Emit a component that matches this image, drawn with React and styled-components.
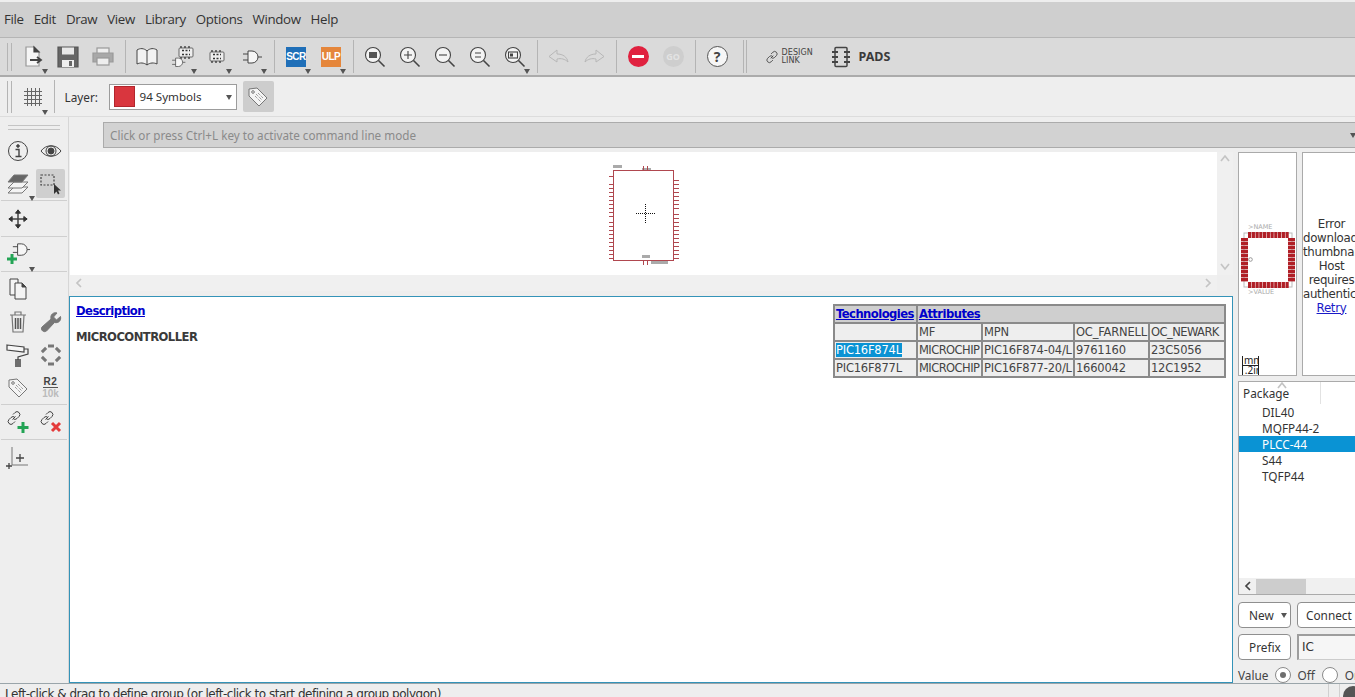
import React from "react";
import styled, { createGlobalStyle } from "styled-components";

const Global = createGlobalStyle`
  html, body { margin: 0; padding: 0; background: #eeeeee; overflow: hidden; }
  * { box-sizing: border-box; }
`;

const UI = `"Noto Sans", "DejaVu Sans", sans-serif`;
const TAHOMA = `"DejaVu Sans", "Noto Sans", sans-serif`;

const Page = styled.div`
  width: 1355px; height: 697px; overflow: hidden; background: #eee;
  display: flex; flex-direction: column; font-family: ${UI}; color: #333;
`;
const MenuBar = styled.nav`
  height: 36px; margin-top: 2px; background: #cfcfcf; border-bottom: 1px solid #b5b5b5;
  display: flex; align-items: center; gap: 10px; padding: 0 0 2px 4px; font-size: 13.3px; flex: none;
  font-family: "Open Sans", sans-serif; letter-spacing: -0.35px;
`;
const Toolbar = styled.div`
  height: 39px; background: #dadada; border-bottom: 2px solid #ababab; flex: none;
  display: flex; align-items: center; padding-left: 7px;
`;
const Grip = styled.span`
  width: 5px; height: ${p => p.$h || 28}px; flex: none; margin-right: 3.5px;
  border-left: 1px solid #b4b4b4; border-right: 1px solid #b4b4b4;
`;
const Sep = styled.span`
  width: 1px; height: 33px; background: #b4b4b4; flex: none;
  margin: 0 ${p => p.$mr ?? 4}px 0 ${p => p.$ml ?? 4}px;
`;
const ToolBtn = styled.span`
  position: relative; width: 35px; height: 34px; flex: none;
  display: flex; align-items: center; justify-content: center;
`;
const Caret = styled.i`
  position: absolute; right: ${p => p.$r ?? 4}px; bottom: ${p => p.$b ?? 1}px; width: 0; height: 0;
  border-left: 3.5px solid transparent; border-right: 3.5px solid transparent; border-top: 5px solid #555;
`;
const DesignLink = styled.span`
  display: flex; align-items: center; gap: 3px; margin-left: 18px; width: 66px;
`;
const DesignText = styled.span`
  font: 500 8px/7.5px ${TAHOMA}; letter-spacing: 0.1px; color: #444; white-space: pre-line;
`;
const Pads = styled.span`
  display: flex; align-items: center; gap: 8px; font: 700 12.5px "Noto Sans", sans-serif; color: #3a3a3a;
`;
const LayerBar = styled.div`
  height: 40px; background: #eeeeee; border-bottom: 1px solid #dcdcdc; flex: none;
  display: flex; align-items: center; padding-left: 7px;
`;
const LayerLabel = styled.span`
  font: 11.8px ${UI}; margin-left: 10px; width: 44px; color: #333;
`;
const LayerSelect = styled.div`
  width: 128px; height: 26px; background: #fff; border: 1px solid #9c9c9c;
  display: flex; align-items: center; padding-left: 4px; font: 11.6px ${UI}; position: relative; color: #333;
`;
const Swatch = styled.span`
  width: 21px; height: 21px; background: #d9363e; border: 1px solid #b2262d; margin-right: 5px;
`;
const TagBtn = styled.span`
  width: 31px; height: 31px; margin-left: 6px; background: #cdcdcd; border-radius: 2px;
  display: flex; align-items: center; justify-content: center;
`;
const Body = styled.div`
  flex: 1; display: flex; min-height: 0;
`;
const LeftTools = styled.aside`
  width: 69px; flex: none; border-right: 1px solid #d6d6d6; padding: 8px 1px 0 1px;
`;
const ToolGrip = styled.div`
  height: 5px; margin: 0 7px 4px; border-top: 1px solid #c4c4c4; border-bottom: 1px solid #c4c4c4;
`;
const ToolRow = styled.div`
  display: grid; grid-template-columns: 33px 33px; justify-content: start; height: ${p => p.$h || 33}px;
  align-items: center; justify-items: center;
`;
const ToolCell = styled.span`
  position: relative; width: 29px; height: 29px; display: flex; align-items: center; justify-content: center;
  border-radius: 2px; background: ${p => (p.$active ? "#cfcfcf" : "transparent")};
`;
const ToolDivider = styled.div`
  height: 1px; background: #cfcfcf;
`;
const Center = styled.div`
  display: flex; flex-direction: column; flex: 1; min-width: 0;
`;
const CommandWrap = styled.div`
  height: 35px; padding: 5px 0 0 34px; flex: none;
`;
const Command = styled.div`
  height: 26px; background: #d2d2d2; border: 1px solid #ababab; border-right: 0; position: relative;
  display: flex; align-items: center; padding-left: 6px; font: 11.7px ${UI}; color: #8a8a8a;
`;
const Workspace = styled.div`
  flex: 1; display: flex; min-height: 0;
`;
const EditorCol = styled.div`
  width: 1164px; flex: none; display: flex; flex-direction: column;
`;
const CanvasRow = styled.div`
  height: 123px; display: flex; flex: none;
`;
const Canvas = styled.div`
  flex: 1; margin-left: 1px; background: #fff; display: flex; justify-content: center; padding: 12px 2px 0 0;
`;
const VScroll = styled.div`
  width: 16px; background: #f0f0f0; display: flex; flex-direction: column; justify-content: space-between;
  align-items: center; padding: 2px 0 4px;
`;
const HScroll = styled.div`
  height: 16px; margin-left: 1px; margin-right: 16px; background: #f0f0f0; flex: none;
  display: flex; justify-content: space-between; align-items: center; padding: 0 5px;
`;
const Spacer = styled.div`
  height: 5px; flex: none;
`;
const Description = styled.section`
  flex: 1; background: #fff; border: 1px solid #3493b8; display: flex; justify-content: space-between;
  align-items: flex-start; padding: 7px 6px 0 6px;
`;
const DescText = styled.div`
  font: 700 11.6px "DejaVu Sans", sans-serif; letter-spacing: -0.55px; color: #333;
`;
const Link = styled.a`
  color: #0000cc; text-decoration: underline; font-weight: 700;
`;
const DescBody = styled.p`
  margin: 12px 0 0; color: #3a3a3a;
`;
const Attr = styled.table`
  border-collapse: separate; border-spacing: 2px; background: #8a8a8a; width: 393px; table-layout: fixed;
  font: 11.5px ${TAHOMA}; letter-spacing: -0.2px; color: #444;
  td, th { padding: 0 1px; height: 16px; line-height: 16px; background: #eeeeee; font-weight: 400; text-align: left; white-space: nowrap; overflow: visible; }
  th { background: #cfcfcf; font-weight: 700; font-size: 11.6px; letter-spacing: -0.55px; }
`;
const Tight = styled.span`
  letter-spacing: -0.55px;
`;
const Selected = styled.span`
  background: #0a93d4; color: #fff;
`;
const RightPanel = styled.div`
  flex: 1; min-width: 0; padding-left: 5px; display: flex; flex-direction: column; overflow: hidden;
`;
const Thumbs = styled.div`
  display: flex; gap: 5px; height: 224px; flex: none; width: 140px;
`;
const Thumb = styled.div`
  position: relative; flex: none; width: ${p => p.$w}px; background: #fff; border: 1px solid #aaa;
  display: flex; flex-direction: column; align-items: ${p => (p.$start ? "flex-start" : "center")}; justify-content: center; overflow: hidden;
`;
const PackageWrap = styled.span`
  display: block; margin-top: -10px; line-height: 0;
`;
const Scale = styled.div`
  position: absolute; left: 3px; bottom: 0; width: 17px; height: 19px; overflow: hidden;
  display: flex; flex-direction: column; align-items: center; font: 10px/9px ${UI}; color: #222;
  border: 1px solid #222; border-width: 0 1px;
`;
const ScaleLine = styled.span`
  flex: none; white-space: nowrap; border-bottom: ${p => (p.$u ? "1px solid #222" : "0")};
`;
const ThumbMsg = styled.div`
  width: 57px; flex: none; text-align: center; font: 11.8px/14px ${TAHOMA}; letter-spacing: -0.3px; color: #333; margin-top: 3px;
`;
const MsgLine = styled.div`
  white-space: nowrap;
`;
const Retry = styled.a`
  color: #1a1ac8; text-decoration: underline; display: block;
`;
const ListBox = styled.div`
  margin-top: 5px; height: 214px; width: 140px; background: #fff; border: 1px solid #aaa; flex: none;
  display: flex; flex-direction: column; position: relative;
`;
const ListHead = styled.div`
  height: 22px; flex: none; padding: 3px 0 0 4px; font: 11.8px ${UI}; color: #333; position: relative; width: 82px;
  border-right: 1px solid #e2e2e2;
`;
const SortMark = styled.span`
  position: absolute; left: 38px; top: -1px; line-height: 0;
`;
const ListItem = styled.div`
  height: 16px; font: 11.8px/16px ${UI}; padding-left: 23px; flex: none;
  background: ${p => (p.$sel ? "#0a93d4" : "transparent")}; color: ${p => (p.$sel ? "#fff" : "#333")};
`;
const ListScroll = styled.div`
  margin-top: auto; height: 16px; background: #f0f0f0; display: flex; align-items: center; padding-left: 5px; flex: none;
`;
const Thumbbar = styled.span`
  width: 50px; height: 15px; background: #cdcdcd; margin-left: 4px;
`;
const BtnRow = styled.div`
  display: flex; gap: 6px; margin-top: ${p => p.$mt}px; width: 140px; flex: none;
`;
const Btn = styled.span`
  position: relative; flex: none; width: ${p => p.$w}px; height: 26px; border: 1px solid #8f8f8f; border-radius: 4px; background: #fff;
  font: 11.8px/24px ${UI}; padding-left: ${p => p.$pl ?? 10}px; color: #333; white-space: nowrap;
`;
const Field = styled.span`
  flex: none; width: 70px; height: 26px; border: 1px solid #ccc; border-left: 2px solid #9d9d9d; border-top: 2px solid #9d9d9d;
  background: #f6f6f6; font: 12px/22px "DejaVu Sans", sans-serif; padding-left: 3px; color: #333;
`;
const ValueRow = styled.div`
  display: flex; align-items: center; margin-top: 6px; font: 11.8px ${UI}; width: 140px; height: 18px; flex: none; color: #444;
`;
const Radio = styled.span`
  width: 16px; height: 16px; border-radius: 50%; border: 1px solid #8a8a8a; background: #fff; flex: none;
  margin: 0 ${p => p.$mr}px 0 ${p => p.$ml}px; display: flex; align-items: center; justify-content: center;
  &::after { content: ""; width: 6px; height: 6px; border-radius: 50%; background: ${p => (p.$on ? "#6f6f6f" : "transparent")}; }
`;
const Status = styled.footer`
  height: 14px; flex: none; border-top: 1px solid #9aa5aa; background: #eee; padding: 3px 0 0 5px;
  font: 12px/14px ${TAHOMA}; letter-spacing: -0.48px; color: #333; display: flex; position: relative; overflow: hidden;
`;
const StatusSep = styled.span`
  position: absolute; left: ${p => p.$x}px; top: 0; bottom: 0; width: 1px; background: #d0d0d0;
`;
const StatusDot = styled.span`
  position: absolute; left: 1343px; top: 2px; width: 20px; height: 20px; border-radius: 50%; background: #555;
`;

const S = ({ w = 24, h = 24, vb, children, sw = 1.2, c = "#444", ...r }) => (
  <svg width={w} height={h} viewBox={vb || `0 0 ${w} ${h}`} fill="none" stroke={c} strokeWidth={sw} {...r}>{children}</svg>
);

const NewIco = () => (<S><path d="M5 2h8l5 5v14H5z" fill="#f6f6f6" stroke="#999" /><path d="M13 2v5h5z" fill="#444" stroke="#444" /><path d="M9 15h10M16 12l4 3-4 3" stroke="#444" strokeWidth="1.8" /></S>);
const SaveIco = () => (<S><path d="M2 2h20v20H2z" fill="#666" stroke="#555" /><rect x="6" y="2.5" width="12" height="7" fill="#e8e8e8" stroke="none" /><rect x="6" y="15" width="12" height="7" fill="#eee" stroke="none" /><rect x="13" y="16" width="3" height="5" fill="#666" stroke="none" /></S>);
const PrintIco = () => (<S><rect x="6" y="3" width="12" height="6" fill="#eee" stroke="#999" /><path d="M2 8h20v9H2z" fill="#a8a8a8" stroke="#999" /><rect x="6" y="13" width="12" height="7" fill="#eee" stroke="#999" /></S>);
const BookIco = () => (<S sw={1}><path d="M12 6C9 3 5 3 2 5v14c3-1.5 7-1.5 10 1 3-2.5 7-2.5 10-1V5c-3-2-7-2-10 1zM12 6v14" fill="#f2f2f2" /></S>);
const Chip = ({ x = 0, y = 0 }) => (<g transform={`translate(${x} ${y})`}><rect x="2" y="3" width="14" height="9" rx="1" stroke="#666" fill="#eee" strokeWidth="1" /><path d="M4 3V1M8 3V1M12 3V1M4 14v-2M8 14v-2M12 14v-2M5 5.500h8M5 9.500h8" stroke="#333" strokeDasharray="2 1.500" strokeWidth="1.300" /></g>);
const Gate = ({ c = "#444" }) => (<g stroke={c} strokeWidth="1"><path d="M8 3h4a6 6 0 0 1 0 12H8z" fill="#f6f6f6" /><path d="M3 6h5M3 12h5M18 9h4" /></g>);
const BoardIco = () => (<S><Chip x="7" y="0" /><g transform="translate(0 11) scale(.7)"><Gate /></g></S>);
const ChipIco = () => (<S><Chip x="3" y="4" /></S>);
const GateIco = () => (<S><g transform="translate(0 3)"><Gate /></g></S>);
const Badge = styled.span`
  width: 20px; height: 20px; display: flex; align-items: center; justify-content: center; font: 700 10px "Liberation Sans", sans-serif;
  color: #fff; background: ${p => p.$c}; letter-spacing: -0.5px;
`;
const Zoom = ({ children }) => (<S sw={1.1}><circle cx="10" cy="10" r="7.500" fill="#f4f4f4" /><path d="M15.500 15.500l6 6" strokeWidth="1.600" />{children}</S>);
const ArrowL = () => (<S w={22} h={16} c="#b7b7b7" sw={1}><path d="M9 1L1 7.500 9 13V10c4-1 8 0 11 3-1-5-5-8-11-8z" /></S>);
const ArrowR = () => (<S w={22} h={16} c="#b7b7b7" sw={1}><path d="M13 1l8 6.500L13 13V10C9 9 5 10 2 13c1-5 5-8 11-8z" /></S>);
const Stop = styled.span`
  width: 21px; height: 21px; border-radius: 50%; background: #e0213f; display: flex; align-items: center; justify-content: center;
  &::after { content: ""; width: 12px; height: 3px; background: #fff; }
`;
const Go = styled.span`
  width: 21px; height: 21px; border-radius: 50%; background: #cecece; color: #e3e3e3; font: 700 9px/21px ${UI}; text-align: center;
`;
const Help = styled.span`
  width: 21px; height: 21px; border-radius: 50%; border: 1px solid #555; background: #f6f6f6; color: #444; font: 700 14px/19px ${UI}; text-align: center;
`;
const LinkIco = ({ w = 16, h = 16 }) => (<S w={w} h={h} vb="0 0 16 16" sw={1}><path d="M6.500 9.500l3-3M7 4.500l2-2a2.800 2.800 0 0 1 4 4l-2 2a2.800 2.800 0 0 1-4 0M9 11.500l-2 2a2.800 2.800 0 0 1-4-4l2-2a2.800 2.800 0 0 1 4 0" /></S>);
const PadsIco = () => (<S w={20} h={22} sw={1.500}><rect x="4" y="1.500" width="12" height="19" rx="1" /><path d="M1 6h6M1 11h6M1 16h6M13 6h6M13 11h6M13 16h6" strokeWidth="2" /></S>);
const GridIco = () => (<S w={20} h={20} sw={1} c="#666"><path d="M4.500 1v18M8.500 1v18M12.500 1v18M16.500 1v18M1 4.500h18M1 8.500h18M1 12.500h18M1 16.500h18" /></S>);
const TagIco = () => (<S w={22} h={22} c="#777" sw={1}><path d="M2 3l8-1 10 10-8 8L2 10z" fill="#f4f4f4" /><circle cx="6" cy="6" r="1.300" /><path d="M9 8l6 6M8 10l6 6M11 7l5 5" strokeDasharray="1 1" /></S>);
const InfoIco = () => (<S sw={1}><circle cx="12" cy="12" r="9.500" /><circle cx="12" cy="7" r="1.300" fill="#444" /><path d="M9.500 10.500H13V17M9.500 17.500h6" strokeWidth="1.400" /></S>);
const EyeIco = () => (<S sw={1}><path d="M2 12c5-7 15-7 20 0-5 7-15 7-20 0z" /><circle cx="12" cy="12" r="5" /><circle cx="12" cy="12" r="3" fill="#444" /></S>);
const LayersIco = () => (<S c="#777" sw={1}><path d="M2 21l6-6h14l-6 6z" fill="#f4f4f4" /><path d="M2 16l6-6h14l-6 6z" fill="#f4f4f4" /><path d="M2 10l6-7h14l-6 7z" fill="#666" /></S>);
const SelectIco = () => (<S><rect x="2" y="3" width="13" height="10" strokeDasharray="2 1.500" /><path d="M15 12v10l2.500-2.500 1.500 3 1.500-1-1.500-3H22z" fill="#333" stroke="none" /></S>);
const MoveIco = () => (<S w={20} h={20} vb="0 0 24 24"><path d="M12 2v20M2 12h20" strokeWidth="1.800" /><path d="M12 1l3 4H9zM12 23l3-4H9zM1 12l4-3v6zM23 12l-4-3v6z" fill="#333" stroke="#333" /></S>);
const AddGateIco = () => (<S><g transform="translate(4 -1) scale(.95)"><Gate /></g><path d="M6 12v10M1 17h10" stroke="#23a455" strokeWidth="3" /></S>);
const CopyIco = () => (<S sw={1}><path d="M4 2h8v16H4z" fill="#f4f4f4" /><path d="M9 6h7l4 4v12H9z" fill="#f4f4f4" /><path d="M16 6v4h4z" fill="#444" /></S>);
const TrashIco = () => (<S c="#777" sw={1.200}><path d="M4 5h16M9 5V2h6v3M6 5l1 17h10l1-17" /><path d="M9.500 8v11M12 8v11M14.500 8v11" strokeWidth="1.500" stroke="#555" /></S>);
const WrenchIco = () => (<S w={22} h={22} sw={1} c="#777"><path d="M20.500 5.500l-4 3.500-3-3 3.500-4c-3-1-7 1-6 6L2 16c-2 3 2 6 4.500 4l8-8.500c4 1 7-2 6-6z" fill="#777" /></S>);
const RollerIco = () => (<S sw={1.200}><path d="M1 2l17 2v5L1 7z" fill="#f6f6f6" /><path d="M18 6h4v5l-10 3v3" /><path d="M9 17h6M9 19h6M9 21h6M9 23h6" strokeWidth="1.500" /></S>);
const RingIco = () => (<S c="#777" sw={0}><g fill="#777">{[[12, 3, 0], [19, 7, 45], [19, 16, -45], [12, 21, 0], [5, 16, 45], [5, 7, -45]].map(([x, y, r]) => <rect key={`${x}${y}`} x={x - 3} y={y - 1.500} width="6" height="3" transform={`rotate(${r} ${x} ${y})`} />)}</g></S>);
const R2 = styled.span`
  display: flex; flex-direction: column; align-items: center; font: 700 10px/9px "Liberation Sans", sans-serif; color: #444;
`;
const R2Top = styled.span`
  border-bottom: 1px solid #555; padding: 0 1px 1px; letter-spacing: 0.5px;
`;
const R2Bot = styled.span`
  color: #bbb; padding-top: 1px;
`;
const LinkAdd = () => (<S><LinkIco /><path d="M17 12v11M11.500 17.500h11" stroke="#23a455" strokeWidth="3" /></S>);
const LinkDel = () => (<S><LinkIco /><path d="M13 13l8 8M21 13l-8 8" stroke="#e43b3b" strokeWidth="3" /></S>);
const MarkIco = () => (<S sw={1}><path d="M6 1v18M6 19h16" stroke="#777" /><path d="M14 8v8M10 12h8M3 17v6M0 20h6" strokeWidth="1.300" /></S>);
const ChevV = ({ up }) => (<S w={10} h={8} c="#c4c4c4" sw={1.700}><path d={up ? "M1 7l4-5 4 5" : "M1 1l4 5 4-5"} /></S>);
const ChevH = ({ left, c = "#c4c4c4" }) => (<S w={8} h={10} c={c} sw={1.700}><path d={left ? "M6 1L2 5l4 4" : "M2 1l4 4-4 4"} /></S>);

const Symbol = () => {
  const left = [0, 8, 12, 16, 20, 24, 28, 32, 36, 40, 46, 50, 54, 58, 62, 66, 70, 74, 78, 82];
  const right = [4, 8, 12, 16, 20, 24, 28, 32, 38, 42, 46, 50, 54, 58, 62, 66, 70, 74, 78, 82];
  return (
    <svg width="74" height="103" viewBox="0 0 74 103">
      <rect x="7" y="1" width="9" height="3" fill="#aaa" />
      <rect x="36" y="4" width="9" height="3" fill="#aaa" />
      <rect x="36" y="91" width="8" height="3" fill="#aaa" />
      <rect x="45" y="97" width="17" height="3" fill="#aaa" />
      <g stroke="#b0474f" strokeWidth="1" fill="none">
        <rect x="7.500" y="6.500" width="60" height="90" />
        <path d="M37.500 2v4M41.500 2v4M37.500 97v4M41.500 97v4" />
        {left.map(v => <path key={v} d={`M3 ${v + 12.500}h4`} />)}
        {right.map(v => <path key={v} d={`M68 ${v + 12.500}h5`} />)}
      </g>
      <path d="M39.500 40v19M30 49.500h19" stroke="#111" strokeWidth="1" strokeDasharray="1 1" />
    </svg>
  );
};

const Package = () => {
  const h = Array.from({ length: 11 }, (_, i) => i);
  return (
    <svg width="56" height="72" viewBox="0 0 56 72">
      <text x="8" y="6" fontFamily="DejaVu Sans" fontSize="6.500" fill="#aaa">&gt;NAME</text>
      <text x="8" y="71" fontFamily="DejaVu Sans" fontSize="6.500" fill="#aaa">&gt;VALUE</text>
      <rect x="4" y="10" width="48" height="54" fill="none" stroke="#bbb" />
      <g fill="#b01f26">
        {h.map(i => <rect key={`t${i}`} x={8 + i * 3.750} y="9" width="3.200" height="6" />)}
        {h.map(i => <rect key={`b${i}`} x={8 + i * 3.750} y="59" width="3.200" height="6" />)}
        {h.map(i => <rect key={`l${i}`} x="1" y={15 + i * 4} width="7" height="3.400" />)}
        {h.map(i => <rect key={`r${i}`} x="48" y={15 + i * 4} width="7" height="3.400" />)}
      </g>
      <circle cx="10.500" cy="36.500" r="1.800" fill="#fff" stroke="#999" />
    </svg>
  );
};

const TB = ({ children, caret, b = 0 }) => (<ToolBtn>{children}{caret && <Caret $r={3} $b={b} />}</ToolBtn>);
const TC = ({ children, active, caret }) => (<ToolCell $active={active}>{children}{caret && <Caret $r={-3} $b={-3} />}</ToolCell>);

const rows = [
  { n: "PIC16F874L", sel: true, mpn: "PIC16F874-04/L", f: "9761160", w: "23C5056" },
  { n: "PIC16F877L", mpn: "PIC16F877-20/L", f: "1660042", w: "12C1952" },
];
const msg = ["Error", "downloading", "thumbnail", "Host", "requires", "authentication"];

export default function App() {
  return (
    <Page>
      <Global />
      <MenuBar>
        {["File", "Edit", "Draw", "View", "Library", "Options", "Window", "Help"].map(m => <span key={m}>{m}</span>)}
      </MenuBar>
      <Toolbar>
        <Grip />
        <TB caret><NewIco /></TB>
        <TB><SaveIco /></TB>
        <TB><PrintIco /></TB>
        <Sep />
        <TB><BookIco /></TB>
        <TB caret><BoardIco /></TB>
        <TB caret><ChipIco /></TB>
        <TB caret><GateIco /></TB>
        <Sep />
        <TB caret><Badge $c="#1f6fb8">SCR</Badge></TB>
        <TB caret><Badge $c="#e5863b">ULP</Badge></TB>
        <Sep />
        <TB><Zoom><rect x="6" y="7" width="8" height="6" fill="#555" stroke="none" /></Zoom></TB>
        <TB><Zoom><path d="M6 10h8M10 6v8" /></Zoom></TB>
        <TB><Zoom><path d="M6 10h8" /></Zoom></TB>
        <TB><Zoom><path d="M7 8h6M7 12h6" /></Zoom></TB>
        <TB caret><Zoom><rect x="5.500" y="7" width="9" height="6" /><rect x="7" y="8.500" width="3" height="3" fill="#444" stroke="none" /></Zoom></TB>
        <Sep />
        <TB><ArrowL /></TB>
        <TB><ArrowR /></TB>
        <Sep />
        <TB><Stop /></TB>
        <TB><Go>GO</Go></TB>
        <Sep />
        <TB><Help>?</Help></TB>
        <Sep $ml={8} $mr={0} />
        <Sep $ml={2} $mr={0} />
        <DesignLink><LinkIco w={14} h={14} /><DesignText>{"DESIGN\nLINK"}</DesignText></DesignLink>
        <Pads><PadsIco />PADS</Pads>
      </Toolbar>
      <LayerBar>
        <Grip $h={32} />
        <TB caret b={-1}><GridIco /></TB>
        <Sep $ml={3} $mr={0} />
        <LayerLabel>Layer:</LayerLabel>
        <LayerSelect>
          <Swatch />94 Symbols<Caret $r={4} $b={9} />
        </LayerSelect>
        <TagBtn><TagIco /></TagBtn>
      </LayerBar>
      <Body>
        <LeftTools>
          <ToolGrip />
          <ToolRow><TC><InfoIco /></TC><TC><EyeIco /></TC></ToolRow>
          <ToolRow><TC caret><LayersIco /></TC><TC active><SelectIco /></TC></ToolRow>
          <ToolDivider />
          <ToolRow $h={35}><TC><MoveIco /></TC></ToolRow>
          <ToolDivider />
          <ToolRow $h={34}><TC caret><AddGateIco /></TC></ToolRow>
          <ToolDivider />
          <ToolRow><TC><CopyIco /></TC></ToolRow>
          <ToolRow><TC><TrashIco /></TC><TC><WrenchIco /></TC></ToolRow>
          <ToolRow><TC><RollerIco /></TC><TC><RingIco /></TC></ToolRow>
          <ToolRow><TC><TagIco /></TC><TC><R2><R2Top>R2</R2Top><R2Bot>10k</R2Bot></R2></TC></ToolRow>
          <ToolDivider />
          <ToolRow $h={34}><TC><LinkAdd /></TC><TC><LinkDel /></TC></ToolRow>
          <ToolDivider />
          <ToolRow $h={35}><TC><MarkIco /></TC></ToolRow>
        </LeftTools>
        <Center>
          <CommandWrap>
            <Command>
              Click or press Ctrl+L key to activate command line mode
              <Caret $r={-1} $b={9} />
            </Command>
          </CommandWrap>
          <Workspace>
            <EditorCol>
              <CanvasRow>
                <Canvas><Symbol /></Canvas>
                <VScroll><ChevV up /><ChevV /></VScroll>
              </CanvasRow>
              <HScroll><ChevH left /><ChevH /></HScroll>
              <Spacer />
              <Description>
                <DescText>
                  <Link href="#">Description</Link>
                  <DescBody>MICROCONTROLLER</DescBody>
                </DescText>
                <Attr>
                  <colgroup>
                    <col width="81" /><col width="63" /><col width="90" /><col width="73" /><col width="74" />
                  </colgroup>
                  <tbody>
                    <tr><th><Link href="#">Technologies</Link></th><th colSpan={4}><Link href="#">Attributes</Link></th></tr>
                    <tr><td></td><td>MF</td><td>MPN</td><td>OC_FARNELL</td><td><Tight>OC_NEWARK</Tight></td></tr>
                    {rows.map(r => (
                      <tr key={r.n}>
                        <td>{r.sel ? <Selected>{r.n}</Selected> : r.n}</td>
                        <td><Tight>MICROCHIP</Tight></td><td>{r.mpn}</td><td>{r.f}</td><td>{r.w}</td>
                      </tr>
                    ))}
                  </tbody>
                </Attr>
              </Description>
            </EditorCol>
            <RightPanel>
              <Thumbs>
                <Thumb $w={59}>
                  <PackageWrap><Package /></PackageWrap>
                  <Scale><ScaleLine $u>1mm</ScaleLine><ScaleLine>1.2in</ScaleLine></Scale>
                </Thumb>
                <Thumb $w={76} $start>
                  <ThumbMsg>
                    {msg.map(m => <MsgLine key={m}>{m}</MsgLine>)}
                    <Retry href="#">Retry</Retry>
                  </ThumbMsg>
                </Thumb>
              </Thumbs>
              <ListBox>
                <ListHead>
                  <SortMark><ChevV up /></SortMark>
                  Package
                </ListHead>
                <ListItem>DIL40</ListItem>
                <ListItem>MQFP44-2</ListItem>
                <ListItem $sel>PLCC-44</ListItem>
                <ListItem>S44</ListItem>
                <ListItem>TQFP44</ListItem>
                <ListScroll><ChevH left c="#444" /><Thumbbar /></ListScroll>
              </ListBox>
              <BtnRow $mt={7}><Btn $w={53}>New<Caret $r={3} $b={9} /></Btn><Btn $w={80} $pl={8}>Connect</Btn></BtnRow>
              <BtnRow $mt={6}><Btn $w={53}>Prefix</Btn><Field>IC</Field></BtnRow>
              <ValueRow>Value<Radio $ml={7} $mr={6} $on />Off<Radio $ml={7} $mr={7} />On</ValueRow>
            </RightPanel>
          </Workspace>
        </Center>
      </Body>
      <Status>
        Left-click &amp; drag to define group (or left-click to start defining a group polygon)
        <StatusSep $x={1328} /><StatusSep $x={1339} /><StatusDot />
      </Status>
    </Page>
  );
}
